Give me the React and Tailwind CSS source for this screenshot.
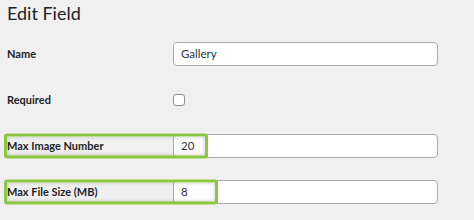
import React from 'react';

const fieldRows = [
    { id: 'name', label: 'Name', type: 'text', value: 'Gallery' },
    { id: 'required', label: 'Required', type: 'checkbox' },
    { id: 'max-images', label: 'Max Image Number', type: 'text', value: '20', highlight: 'w-[204px]' },
    { id: 'max-size', label: 'Max File Size (MB)', type: 'text', value: '8', highlight: 'w-[214px]' },
];

const FieldRow = ({ row }) => (
    <div className="relative flex items-center h-[46px]">
        <label htmlFor={row.id} className="w-[173px] pl-[7px] text-[11px] font-bold text-[#1d2327]">
            {row.label}
        </label>
        {row.type === 'checkbox' ? (
            <span className="block w-[12px] h-[12px] rounded-[3px] border border-[#8c8f94] bg-white" />
        ) : (
            <div className="w-[265px] h-[24px] flex items-center px-[7px] rounded-[4px] border border-[#a7aaad] bg-white text-[11.5px] text-[#2c3338]">
                {row.value}
            </div>
        )}
        {/* green annotation box drawn over label and input */}
        {row.highlight && (
            <div
                className={`absolute left-[4px] top-1/2 -translate-y-1/2 h-[25px] ${row.highlight} rounded-[3px] border-[3px] border-[#8dc63f] shadow-[inset_0_0_4px_rgba(0,0,0,0.22)]`}
            />
        )}
    </div>
);

const App = () => {
    return (
        <div
            className="w-[474px] h-[220px] bg-[#f0f0f1] overflow-hidden"
            style={{ fontFamily: 'Lato, "Noto Sans", sans-serif' }}
        >
            <div className="h-[31px] pl-[7px] pt-[1px]">
                <h1 className="text-[18px] leading-[24px] font-normal text-[#1d2327]">Edit Field</h1>
            </div>
            {fieldRows.map((row) => (
                <FieldRow key={row.id} row={row} />
            ))}
        </div>
    );
};

export default App;
